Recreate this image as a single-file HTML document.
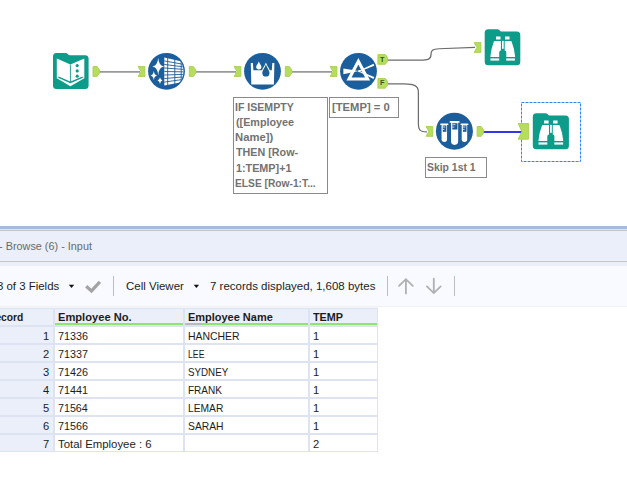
<!DOCTYPE html>
<html><head><meta charset="utf-8"><title>Workflow</title>
<style>
html,body{margin:0;padding:0;background:#fff;}
body{width:627px;height:481px;position:relative;overflow:hidden;font-family:"Liberation Sans",sans-serif;}
.t{position:absolute;white-space:nowrap;line-height:1;display:inline-block;}
.abs{position:absolute}
</style></head><body>
<div class="abs" style="left:0;top:226px;width:627px;height:3px;background:#a9b9dd"></div>
<div class="abs" style="left:0;top:229px;width:627px;height:1px;background:#e3e3e3"></div>
<div class="abs" style="left:0;top:230px;width:627px;height:1px;background:#c4c4c4"></div>
<div class="abs" style="left:0;top:231px;width:627px;height:35px;background:#ebeffa"></div>
<div class="abs" style="left:0;top:261px;width:627px;height:1px;background:#c6c6c6"></div>
<div class="abs" style="left:0;top:266px;width:627px;height:40px;background:#f8faff"></div>
<div class="abs" style="left:113px;top:276px;width:1px;height:20px;background:#bdbdbd"></div>
<div class="abs" style="left:387px;top:276px;width:1px;height:20px;background:#bdbdbd"></div>
<div class="abs" style="left:454px;top:276px;width:1px;height:20px;background:#bdbdbd"></div>
<div style="position:absolute;left:0;top:306px;width:627px;height:1px;background:#f1f1f1"></div><div style="position:absolute;left:0;top:307px;width:378px;height:1px;background:#f4f6fc"></div><div style="position:absolute;left:0;top:308px;width:378px;height:144px;background:#dde3f1"></div><div style="position:absolute;left:0px;top:309px;width:53px;height:16px;background:#ebeffa"></div><div style="position:absolute;left:55px;top:309px;width:128px;height:16px;background:#ebeffa"></div><div style="position:absolute;left:55px;top:323px;width:128px;height:2px;background:#8ee66f"></div><div style="position:absolute;left:185px;top:309px;width:123px;height:16px;background:#ebeffa"></div><div style="position:absolute;left:185px;top:323px;width:123px;height:2px;background:#8ee66f"></div><div style="position:absolute;left:310px;top:309px;width:67px;height:16px;background:#ebeffa"></div><div style="position:absolute;left:310px;top:323px;width:67px;height:2px;background:#8ee66f"></div><div style="position:absolute;left:185px;top:323px;width:17px;height:2px;background:#b9b9b9"></div><div style="position:absolute;left:0px;top:327px;width:53px;height:16px;background:#ebeffa"></div><div style="position:absolute;left:55px;top:327px;width:128px;height:16px;background:#fff"></div><div style="position:absolute;left:185px;top:327px;width:123px;height:16px;background:#fff"></div><div style="position:absolute;left:310px;top:327px;width:67px;height:16px;background:#fff"></div><div style="position:absolute;left:0px;top:345px;width:53px;height:16px;background:#ebeffa"></div><div style="position:absolute;left:55px;top:345px;width:128px;height:16px;background:#fff"></div><div style="position:absolute;left:185px;top:345px;width:123px;height:16px;background:#fff"></div><div style="position:absolute;left:310px;top:345px;width:67px;height:16px;background:#fff"></div><div style="position:absolute;left:0px;top:363px;width:53px;height:16px;background:#ebeffa"></div><div style="position:absolute;left:55px;top:363px;width:128px;height:16px;background:#fff"></div><div style="position:absolute;left:185px;top:363px;width:123px;height:16px;background:#fff"></div><div style="position:absolute;left:310px;top:363px;width:67px;height:16px;background:#fff"></div><div style="position:absolute;left:0px;top:381px;width:53px;height:16px;background:#ebeffa"></div><div style="position:absolute;left:55px;top:381px;width:128px;height:16px;background:#fff"></div><div style="position:absolute;left:185px;top:381px;width:123px;height:16px;background:#fff"></div><div style="position:absolute;left:310px;top:381px;width:67px;height:16px;background:#fff"></div><div style="position:absolute;left:0px;top:399px;width:53px;height:16px;background:#ebeffa"></div><div style="position:absolute;left:55px;top:399px;width:128px;height:16px;background:#fff"></div><div style="position:absolute;left:185px;top:399px;width:123px;height:16px;background:#fff"></div><div style="position:absolute;left:310px;top:399px;width:67px;height:16px;background:#fff"></div><div style="position:absolute;left:0px;top:417px;width:53px;height:16px;background:#ebeffa"></div><div style="position:absolute;left:55px;top:417px;width:128px;height:16px;background:#fff"></div><div style="position:absolute;left:185px;top:417px;width:123px;height:16px;background:#fff"></div><div style="position:absolute;left:310px;top:417px;width:67px;height:16px;background:#fff"></div><div style="position:absolute;left:0px;top:435px;width:53px;height:16px;background:#ebeffa"></div><div style="position:absolute;left:55px;top:435px;width:128px;height:16px;background:#fff"></div><div style="position:absolute;left:185px;top:435px;width:123px;height:16px;background:#fff"></div><div style="position:absolute;left:310px;top:435px;width:67px;height:16px;background:#fff"></div>
<div style="position:absolute;left:233px;top:97px;width:93px;height:95px;border:1px solid #8a8a8a;background:#fff"></div><div style="position:absolute;left:329px;top:97px;width:68px;height:19px;border:1px solid #8a8a8a;background:#fff"></div><div style="position:absolute;left:425px;top:157px;width:60px;height:19px;border:1px solid #8a8a8a;background:#fff"></div>
<svg class="abs" style="left:0;top:0" width="627" height="481" viewBox="0 0 627 481">
<g fill="none" stroke="#989898" stroke-width="1.7">
<path d="M99.5,71.8 H140"/>
<path d="M195.5,71.8 H236"/>
<path d="M291.5,71.8 H332"/>
<path d="M387.5,60.15 H417 C428,60.4 431,59.8 431,54.6 C431,50 433,49 439,48.75 L475,47.3" stroke="#6c6c6c" stroke-width="1.25"/>
<path d="M387.5,83.95 H404 C414,84.1 418.4,85.4 418.4,92.4 V123.5 C418.4,130 420,131.8 427,131.9" stroke="#6c6c6c" stroke-width="1.25"/>
</g>
<path d="M483,132 H522" stroke="#3434ea" stroke-width="2" fill="none"/>
<path d="M56.5,53 H65.5 Q67,53 68,54.32 Q68.6,55.2 70,55.2 H85.1 Q88.6,55.2 88.6,58.7 V85.5 Q88.6,89 85.1,89 H56.5 Q53,89 53,85.5 V56.5 Q53,53 56.5,53 Z" fill="#0d9b8a"/>
<path d="M56.8,58.6 L70.4,64.6 L84.3,58.6 V78.3 L70.4,86.2 L56.8,78.3 Z" fill="#fff"/>
<path d="M70.4,64.6 V82.5" stroke="#0d9b8a" stroke-width="0.9" fill="none"/>
<path d="M58.4,77.1 L70.4,82.5 L82.7,77.1" stroke="#0d9b8a" stroke-width="1.5" fill="none"/>
<circle cx="77.2" cy="65.6" r="1.6" fill="#0d9b8a"/>
<circle cx="77.2" cy="70.9" r="1.6" fill="#0d9b8a"/>
<circle cx="77.2" cy="76.2" r="1.6" fill="#0d9b8a"/>
<path d="M93.0,66.6 L97.1,66.6 L99.5,70.0 Q99.8,71.5 99.5,73.0 L97.1,76.4 L93.0,76.4 Z" fill="#b6de5c" stroke="#a2ca46" stroke-width="0.8"/>
<circle cx="166.5" cy="71.3" r="18.4" fill="#1b5e9b"/>
<clipPath id="c2"><circle cx="166.5" cy="71.3" r="17"/></clipPath>
<g clip-path="url(#c2)">
<path d="M164.3,57.4 L185,62.2 V81.6 L164.3,85.6 Z" fill="#fff"/>
<path d="M164.3,60.92 L185,64.62" stroke="#1b5e9b" stroke-width="0.9"/>
<path d="M164.3,64.45 L185,67.05" stroke="#1b5e9b" stroke-width="0.9"/>
<path d="M164.3,67.97 L185,69.48" stroke="#1b5e9b" stroke-width="0.9"/>
<path d="M164.3,71.50 L185,71.90" stroke="#1b5e9b" stroke-width="0.9"/>
<path d="M164.3,75.03 L185,74.33" stroke="#1b5e9b" stroke-width="0.9"/>
<path d="M164.3,78.55 L185,76.75" stroke="#1b5e9b" stroke-width="0.9"/>
<path d="M164.3,82.08 L185,79.17" stroke="#1b5e9b" stroke-width="0.9"/>
<path d="M167.7,56 V88" stroke="#1b5e9b" stroke-width="0.9"/>
<path d="M174.8,56 V88" stroke="#1b5e9b" stroke-width="0.9"/>
<path d="M181.2,56 V88" stroke="#1b5e9b" stroke-width="0.9"/>
</g>
<path d="M158.2,57.8 Q158.73999999999998,65.80799999999999 164.2,66.6 Q158.73999999999998,67.392 158.2,75.39999999999999 Q157.66,67.392 152.2,66.6 Q157.66,65.80799999999999 158.2,57.8 Z" fill="#fff"/>
<path d="M153.8,71.0 Q154.276,74.95599999999999 157.20000000000002,75.6 Q154.276,76.244 153.8,80.19999999999999 Q153.324,76.244 150.4,75.6 Q153.324,74.95599999999999 153.8,71.0 Z" fill="#fff"/>
<path d="M160,77.3 Q160.4,80.07199999999999 162.5,80.6 Q160.4,81.128 160,83.89999999999999 Q159.6,81.128 157.5,80.6 Q159.6,80.07199999999999 160,77.3 Z" fill="#fff"/>
<path d="M138.10000000000002,66.6 L144.90000000000003,66.6 L144.90000000000003,76.4 L138.10000000000002,76.4 L140.90000000000003,71.5 Z" fill="#b6de5c" stroke="#a2ca46" stroke-width="0.8"/>
<path d="M189.3,66.6 L193.4,66.6 L195.8,70.0 Q196.1,71.5 195.8,73.0 L193.4,76.4 L189.3,76.4 Z" fill="#b6de5c" stroke="#a2ca46" stroke-width="0.8"/>
<circle cx="262.5" cy="71.3" r="18.4" fill="#1b5e9b"/>
<path d="M250.8,62.9 L252.9,62.9 L253.4,70.2 H271.8 L272.3,62.9 L274.4,62.9 L273.9,84.5 H251.3 Z" fill="#fff"/>
<path d="M258.8,61.4 C260.1,64.37 261.40000000000003,65.24000000000001 261.40000000000003,66.80000000000001 A2.6,2.6 0 1 1 256.2,66.80000000000001 C256.2,65.24000000000001 257.5,64.37 258.8,61.4 Z" fill="#fff"/>
<path d="M265.9,62.4 C268.25,68.175 270.59999999999997,70.08 270.59999999999997,72.89999999999999 A4.7,4.7 0 1 1 261.2,72.89999999999999 C261.2,70.08 263.54999999999995,68.175 265.9,62.4 Z" fill="#fff"/>
<path d="M265.9,64.6 C267.7,69.165 269.5,70.74000000000001 269.5,72.9 A3.6,3.6 0 1 1 262.29999999999995,72.9 C262.29999999999995,70.74000000000001 264.09999999999997,69.165 265.9,64.6 Z" fill="#1b5e9b"/>
<path d="M234.10000000000002,66.6 L240.90000000000003,66.6 L240.90000000000003,76.4 L234.10000000000002,76.4 L236.90000000000003,71.5 Z" fill="#b6de5c" stroke="#a2ca46" stroke-width="0.8"/>
<path d="M285.29999999999995,66.6 L289.4,66.6 L291.79999999999995,70.0 Q292.09999999999997,71.5 291.79999999999995,73.0 L289.4,76.4 L285.29999999999995,76.4 Z" fill="#b6de5c" stroke="#a2ca46" stroke-width="0.8"/>
<circle cx="358.5" cy="71.3" r="18.4" fill="#1b5e9b"/>
<path d="M358.4,61.3 L349,79 H367.6 Z" fill="none" stroke="#fff" stroke-width="3.1" stroke-linejoin="miter"/>
<path d="M343.4,68.4 L358.6,71 L343.4,74.2 Z" fill="#fff"/>
<path d="M359,70.7 L373.5,63.8 L374.3,65.7 L359,71.7 Z" fill="#fff"/><circle cx="359.2" cy="71.2" r="1.1" fill="#fff"/>
<path d="M359,70.7 L374.3,77.1 L373.5,79 L359,71.7 Z" fill="#fff"/>
<path d="M330.1,66.6 L336.90000000000003,66.6 L336.90000000000003,76.4 L330.1,76.4 L332.90000000000003,71.5 Z" fill="#b6de5c" stroke="#a2ca46" stroke-width="0.8"/>
<path d="M377.9,54.6 H385.1 Q385.9,54.800000000000004 387.4,57.2 Q387.5,57.6 387.5,58.2 V60.699999999999996 Q387.5,61.3 387.4,61.699999999999996 Q385.9,64.1 385.1,64.3 H377.9 Z" fill="#b6de5c" stroke="#a2ca46" stroke-width="0.8"/><text x="382.2" y="62.15" font-family="Liberation Sans, sans-serif" font-weight="bold" font-size="7.2" fill="#2c5838" text-anchor="middle">T</text>
<path d="M377.9,78.5 H385.1 Q385.9,78.7 387.4,81.1 Q387.5,81.5 387.5,82.1 V84.6 Q387.5,85.19999999999999 387.4,85.6 Q385.9,87.99999999999999 385.1,88.19999999999999 H377.9 Z" fill="#b6de5c" stroke="#a2ca46" stroke-width="0.8"/><text x="382.2" y="85.15" font-family="Liberation Sans, sans-serif" font-weight="bold" font-size="7.2" fill="#2c5838" text-anchor="middle">F</text>
<path d="M488.2,29.2 H497.2 Q498.7,29.2 499.7,30.52 Q500.3,31.4 501.7,31.4 H516.8 Q520.3,31.4 520.3,34.9 V61.7 Q520.3,65.2 516.8,65.2 H488.2 Q484.7,65.2 484.7,61.7 V32.7 Q484.7,29.2 488.2,29.2 Z" fill="#0d9b8a"/><g transform="translate(0.00,0.00)" fill="#fff"><rect x="496" y="36.5" width="4.5" height="3"/><rect x="505" y="36.5" width="4.5" height="3"/><path d="M494.9,40.9 H500.9 V50.4 Q499.2,50.6 499.2,52.4 V56.9 H490.3 Q491.3,48 493.9,41.6 Q494.2,40.9 494.9,40.9 Z"/><path d="M510.6,40.9 H504.7 V50.4 Q506.3,50.6 506.3,52.4 V56.9 H515.2 Q514.2,48 511.6,41.6 Q511.3,40.9 510.6,40.9 Z"/><rect x="502" y="40.9" width="1.7" height="7.9"/><rect x="490.4" y="58.4" width="8.8" height="2.2"/><rect x="506.2" y="58.4" width="8.8" height="2.2"/></g>
<path d="M474.1,42.6 L480.90000000000003,42.6 L480.90000000000003,52.4 L474.1,52.4 L476.90000000000003,47.5 Z" fill="#b6de5c" stroke="#a2ca46" stroke-width="0.8"/>
<circle cx="454.4" cy="131.2" r="18.5" fill="#1b5e9b"/>
<rect x="440.25" y="123.4" width="8.1" height="1.6" rx="0.5" fill="#fff"/><path d="M441.55,124.4 V139.25 A2.75,2.75 0 0 0 447.05,139.25 V124.4 Z" fill="#fff"/><rect x="442.75" y="125.5" width="3.60" height="6.3" fill="#1b5e9b"/><path d="M442.75,127.0 h2.48 M442.75,129.4 h1.65" stroke="#fff" stroke-width="0.8" fill="none"/>
<rect x="449.65" y="121.1" width="9.9" height="1.6" rx="0.5" fill="#fff"/><path d="M451.05,122.1 V141.35 A3.55,3.55 0 0 0 458.15,141.35 V122.1 Z" fill="#fff"/><rect x="452.25" y="123.19999999999999" width="5.20" height="6.3" fill="#1b5e9b"/><path d="M452.25,124.69999999999999 h3.19 M452.25,127.1 h2.13" stroke="#fff" stroke-width="0.8" fill="none"/>
<rect x="460.50" y="123.4" width="7.9" height="1.6" rx="0.5" fill="#fff"/><path d="M461.70,124.4 V139.25 A2.75,2.75 0 0 0 467.20,139.25 V124.4 Z" fill="#fff"/><rect x="462.90" y="125.5" width="3.60" height="6.3" fill="#1b5e9b"/><path d="M462.90,127.0 h2.48 M462.90,129.4 h1.65" stroke="#fff" stroke-width="0.8" fill="none"/>
<path d="M426.0,126.5 L432.8,126.5 L432.8,136.3 L426.0,136.3 L428.8,131.4 Z" fill="#b6de5c" stroke="#a2ca46" stroke-width="0.8"/>
<path d="M477.09999999999997,126.5 L481.2,126.5 L483.59999999999997,129.9 Q483.9,131.4 483.59999999999997,132.9 L481.2,136.3 L477.09999999999997,136.3 Z" fill="#b6de5c" stroke="#a2ca46" stroke-width="0.8"/>
<path d="M536.3,113.2 H545.3 Q546.8,113.2 547.8,114.52 Q548.4,115.4 549.8,115.4 H565.4 Q568.9,115.4 568.9,118.9 V145.7 Q568.9,149.2 565.4,149.2 H536.3 Q532.8,149.2 532.8,145.7 V116.7 Q532.8,113.2 536.3,113.2 Z" fill="#0d9b8a"/><g transform="translate(48.10,84.00)" fill="#fff"><rect x="496" y="36.5" width="4.5" height="3"/><rect x="505" y="36.5" width="4.5" height="3"/><path d="M494.9,40.9 H500.9 V50.4 Q499.2,50.6 499.2,52.4 V56.9 H490.3 Q491.3,48 493.9,41.6 Q494.2,40.9 494.9,40.9 Z"/><path d="M510.6,40.9 H504.7 V50.4 Q506.3,50.6 506.3,52.4 V56.9 H515.2 Q514.2,48 511.6,41.6 Q511.3,40.9 510.6,40.9 Z"/><rect x="502" y="40.9" width="1.7" height="7.9"/><rect x="490.4" y="58.4" width="8.8" height="2.2"/><rect x="506.2" y="58.4" width="8.8" height="2.2"/></g>
<rect x="521.5" y="102.5" width="59" height="59" fill="none" stroke="#2a88f6" stroke-width="1" stroke-dasharray="2.9,1.1"/>
<path d="M518.1999999999999,123.60000000000001 L528.5999999999999,123.60000000000001 L528.5999999999999,139.20000000000002 L518.1999999999999,139.20000000000002 L521.8,131.4 Z" fill="#b6de5c" stroke="#a2ca46" stroke-width="0.8"/>
<path d="M68.8,284.8 H74.2 L71.5,288 Z" fill="#111"/>
<path d="M193.7,284.8 H199.1 L196.4,288 Z" fill="#111"/>
<path d="M86.2,286.2 L91.5,290.9 L99.9,281.9" fill="none" stroke="#a3a3a3" stroke-width="3.2"/>
<path d="M405.9,293.6 V279.6 M399,285.9 L405.9,279.2 L412.8,285.9" fill="none" stroke="#b0b0b0" stroke-width="1.8" stroke-linecap="round"/>
<path d="M433.8,278.7 V292.8 M426.9,286.4 L433.8,293.1 L440.7,286.4" fill="none" stroke="#b0b0b0" stroke-width="1.8" stroke-linecap="round"/>
</svg>
<span id="h0" class="t" style="left:-11.87px;top:312.27px;font-size:11.5px;font-weight:bold;color:#1c1c1c;transform:scaleX(0.8920);transform-origin:left top">Record</span><span id="h1" class="t" style="left:57.87px;top:312.27px;font-size:11.5px;font-weight:bold;color:#1c1c1c;transform:scaleX(0.9678);transform-origin:left top">Employee No.</span><span id="h2" class="t" style="left:187.78px;top:312.27px;font-size:11.5px;font-weight:bold;color:#1c1c1c;transform:scaleX(0.9538);transform-origin:left top">Employee Name</span><span id="h3" class="t" style="left:312.96px;top:312.27px;font-size:11.5px;font-weight:bold;color:#1c1c1c;transform:scaleX(0.9408);transform-origin:left top">TEMP</span><span id="r0a" class="t" style="left:43.40px;top:331.27px;font-size:11.5px;font-weight:normal;color:#1c1c1c;transform:scaleX(0.9700);transform-origin:left top">1</span><span id="r0b" class="t" style="left:58.03px;top:331.27px;font-size:11.5px;font-weight:normal;color:#1c1c1c;transform:scaleX(0.9387);transform-origin:left top">71336</span><span id="r0c" class="t" style="left:187.79px;top:331.27px;font-size:11.5px;font-weight:normal;color:#1c1c1c;transform:scaleX(0.9068);transform-origin:left top">HANCHER</span><span id="r0d" class="t" style="left:312.90px;top:331.27px;font-size:11.5px;font-weight:normal;color:#1c1c1c;transform:scaleX(0.9700);transform-origin:left top">1</span><span id="r1a" class="t" style="left:43.40px;top:349.27px;font-size:11.5px;font-weight:normal;color:#1c1c1c;transform:scaleX(0.9700);transform-origin:left top">2</span><span id="r1b" class="t" style="left:58.03px;top:349.27px;font-size:11.5px;font-weight:normal;color:#1c1c1c;transform:scaleX(0.9387);transform-origin:left top">71337</span><span id="r1c" class="t" style="left:187.94px;top:349.27px;font-size:11.5px;font-weight:normal;color:#1c1c1c;transform:scaleX(0.7556);transform-origin:left top">LEE</span><span id="r1d" class="t" style="left:312.90px;top:349.27px;font-size:11.5px;font-weight:normal;color:#1c1c1c;transform:scaleX(0.9700);transform-origin:left top">1</span><span id="r2a" class="t" style="left:43.40px;top:367.27px;font-size:11.5px;font-weight:normal;color:#1c1c1c;transform:scaleX(0.9700);transform-origin:left top">3</span><span id="r2b" class="t" style="left:58.03px;top:367.27px;font-size:11.5px;font-weight:normal;color:#1c1c1c;transform:scaleX(0.9387);transform-origin:left top">71426</span><span id="r2c" class="t" style="left:187.88px;top:367.27px;font-size:11.5px;font-weight:normal;color:#1c1c1c;transform:scaleX(0.8497);transform-origin:left top">SYDNEY</span><span id="r2d" class="t" style="left:312.90px;top:367.27px;font-size:11.5px;font-weight:normal;color:#1c1c1c;transform:scaleX(0.9700);transform-origin:left top">1</span><span id="r3a" class="t" style="left:43.40px;top:385.27px;font-size:11.5px;font-weight:normal;color:#1c1c1c;transform:scaleX(0.9700);transform-origin:left top">4</span><span id="r3b" class="t" style="left:58.03px;top:385.27px;font-size:11.5px;font-weight:normal;color:#1c1c1c;transform:scaleX(0.9387);transform-origin:left top">71441</span><span id="r3c" class="t" style="left:187.83px;top:385.27px;font-size:11.5px;font-weight:normal;color:#1c1c1c;transform:scaleX(0.8715);transform-origin:left top">FRANK</span><span id="r3d" class="t" style="left:312.90px;top:385.27px;font-size:11.5px;font-weight:normal;color:#1c1c1c;transform:scaleX(0.9700);transform-origin:left top">1</span><span id="r4a" class="t" style="left:43.40px;top:403.27px;font-size:11.5px;font-weight:normal;color:#1c1c1c;transform:scaleX(0.9700);transform-origin:left top">5</span><span id="r4b" class="t" style="left:58.03px;top:403.27px;font-size:11.5px;font-weight:normal;color:#1c1c1c;transform:scaleX(0.9312);transform-origin:left top">71564</span><span id="r4c" class="t" style="left:187.81px;top:403.27px;font-size:11.5px;font-weight:normal;color:#1c1c1c;transform:scaleX(0.8921);transform-origin:left top">LEMAR</span><span id="r4d" class="t" style="left:312.90px;top:403.27px;font-size:11.5px;font-weight:normal;color:#1c1c1c;transform:scaleX(0.9700);transform-origin:left top">1</span><span id="r5a" class="t" style="left:43.40px;top:421.27px;font-size:11.5px;font-weight:normal;color:#1c1c1c;transform:scaleX(0.9700);transform-origin:left top">6</span><span id="r5b" class="t" style="left:58.03px;top:421.27px;font-size:11.5px;font-weight:normal;color:#1c1c1c;transform:scaleX(0.9387);transform-origin:left top">71566</span><span id="r5c" class="t" style="left:187.85px;top:421.27px;font-size:11.5px;font-weight:normal;color:#1c1c1c;transform:scaleX(0.8967);transform-origin:left top">SARAH</span><span id="r5d" class="t" style="left:312.90px;top:421.27px;font-size:11.5px;font-weight:normal;color:#1c1c1c;transform:scaleX(0.9700);transform-origin:left top">1</span><span id="r6a" class="t" style="left:43.40px;top:439.27px;font-size:11.5px;font-weight:normal;color:#1c1c1c;transform:scaleX(0.9700);transform-origin:left top">7</span><span id="r6b" class="t" style="left:58.05px;top:439.27px;font-size:11.5px;font-weight:normal;color:#1c1c1c;transform:scaleX(0.9888);transform-origin:left top">Total Employee : 6</span><span id="r6d" class="t" style="left:312.90px;top:439.27px;font-size:11.5px;font-weight:normal;color:#1c1c1c;transform:scaleX(0.9700);transform-origin:left top">2</span><span id="title" class="t" style="left:-1.32px;top:241.27px;font-size:11.5px;font-weight:normal;color:#6a6a6a;transform:scaleX(0.9444);transform-origin:left top">- Browse (6) - Input</span><span id="f1" class="t" style="left:-3.40px;top:281.27px;font-size:11.5px;font-weight:normal;color:#1c1c1c;transform:scaleX(0.9927);transform-origin:left top">3 of 3 Fields</span><span id="f2" class="t" style="left:126.10px;top:281.27px;font-size:11.5px;font-weight:normal;color:#1c1c1c;transform:scaleX(0.9982);transform-origin:left top">Cell Viewer</span><span id="f3" class="t" style="left:209.80px;top:281.27px;font-size:11.5px;font-weight:normal;color:#1c1c1c;transform:scaleX(0.9988);transform-origin:left top">7 records displayed, 1,608 bytes</span><span id="a0" class="t" style="left:235.34px;top:102.90px;font-size:10.4px;font-weight:bold;color:#727272;transform:scaleX(1.0167);transform-origin:left top">IF ISEMPTY</span><span id="a1" class="t" style="left:235.98px;top:117.90px;font-size:10.4px;font-weight:bold;color:#727272;transform:scaleX(1.0371);transform-origin:left top">([Employee</span><span id="a2" class="t" style="left:235.29px;top:132.90px;font-size:10.4px;font-weight:bold;color:#727272;transform:scaleX(1.0853);transform-origin:left top">Name])</span><span id="a3" class="t" style="left:236.00px;top:148.20px;font-size:10.4px;font-weight:bold;color:#727272;transform:scaleX(1.0343);transform-origin:left top">THEN [Row-</span><span id="a4" class="t" style="left:235.72px;top:163.70px;font-size:10.4px;font-weight:bold;color:#727272;transform:scaleX(1.0381);transform-origin:left top">1:TEMP]+1</span><span id="a5" class="t" style="left:235.36px;top:178.90px;font-size:10.4px;font-weight:bold;color:#727272;transform:scaleX(0.9839);transform-origin:left top">ELSE [Row-1:T...</span><span id="b0" class="t" style="left:331.76px;top:102.80px;font-size:10.4px;font-weight:bold;color:#727272;transform:scaleX(1.0800);transform-origin:left top">[TEMP] = 0</span><span id="s0" class="t" style="left:427.20px;top:162.90px;font-size:10.4px;font-weight:bold;color:#727272;transform:scaleX(1.0010);transform-origin:left top">Skip 1st 1</span>
</body></html>
